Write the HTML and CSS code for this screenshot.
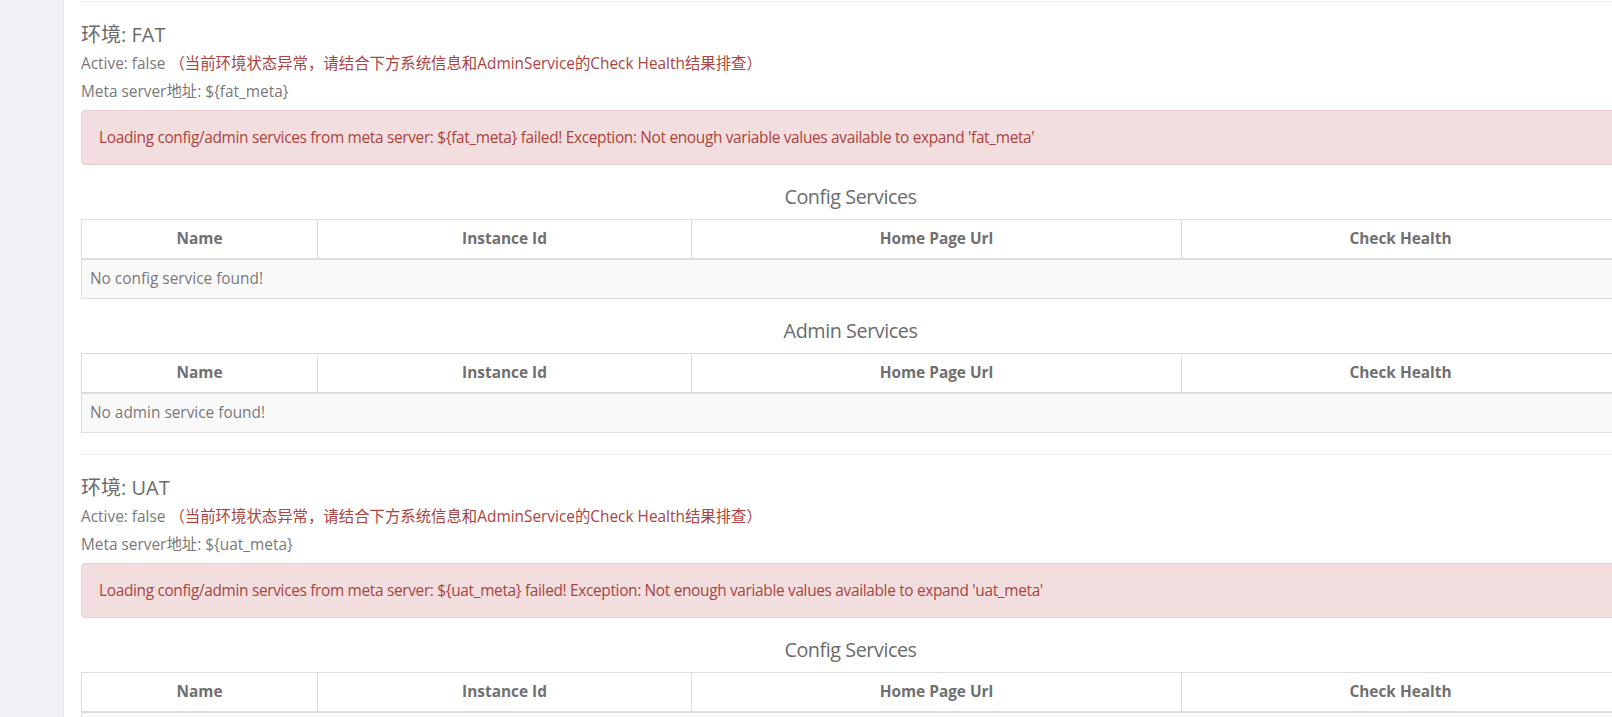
FILE: index.html
```html
<!DOCTYPE html>
<html lang="zh-CN">
<head>
<meta charset="utf-8">
<title>系统信息</title>
<link rel="stylesheet" href="styles.css">
</head>
<body>
<div class="layout">
  <aside class="sidebar"></aside>
  <main class="main">
    <section class="env">
      <h4 class="env-title">环境: FAT</h4>
      <div class="info-line">Active: false <span class="danger">（当前环境状态异常，请结合下方系统信息和AdminService的Check Health结果排查）</span></div>
      <div class="info-line">Meta server地址: ${fat_meta}</div>
      <div class="alert">Loading config/admin services from meta server: ${fat_meta} failed! Exception: Not enough variable values available to expand 'fat_meta'</div>
      <h4 class="svc-title">Config Services</h4>
      <table class="svc-table">
        <colgroup><col class="c-name"><col class="c-inst"><col class="c-url"><col class="c-health"></colgroup>
        <thead><tr><th>Name</th><th>Instance Id</th><th>Home Page Url</th><th>Check Health</th></tr></thead>
        <tbody><tr><td colspan="4">No config service found!</td></tr></tbody>
      </table>
      <h4 class="svc-title">Admin Services</h4>
      <table class="svc-table">
        <colgroup><col class="c-name"><col class="c-inst"><col class="c-url"><col class="c-health"></colgroup>
        <thead><tr><th>Name</th><th>Instance Id</th><th>Home Page Url</th><th>Check Health</th></tr></thead>
        <tbody><tr><td colspan="4">No admin service found!</td></tr></tbody>
      </table>
    </section>
    <section class="env">
      <h4 class="env-title">环境: UAT</h4>
      <div class="info-line">Active: false <span class="danger">（当前环境状态异常，请结合下方系统信息和AdminService的Check Health结果排查）</span></div>
      <div class="info-line">Meta server地址: ${uat_meta}</div>
      <div class="alert">Loading config/admin services from meta server: ${uat_meta} failed! Exception: Not enough variable values available to expand 'uat_meta'</div>
      <h4 class="svc-title">Config Services</h4>
      <table class="svc-table">
        <colgroup><col class="c-name"><col class="c-inst"><col class="c-url"><col class="c-health"></colgroup>
        <thead><tr><th>Name</th><th>Instance Id</th><th>Home Page Url</th><th>Check Health</th></tr></thead>
        <tbody><tr><td colspan="4">No config service found!</td></tr></tbody>
      </table>
      <h4 class="svc-title">Admin Services</h4>
      <table class="svc-table">
        <colgroup><col class="c-name"><col class="c-inst"><col class="c-url"><col class="c-health"></colgroup>
        <thead><tr><th>Name</th><th>Instance Id</th><th>Home Page Url</th><th>Check Health</th></tr></thead>
        <tbody><tr><td colspan="4">No admin service found!</td></tr></tbody>
      </table>
    </section>
  </main>
</div>
</body>
</html>
```

FILE: styles.css
```css
html, body {
  margin: 0;
  padding: 0;
  height: 100%;
  overflow: hidden;
  background: #fff;
}

body {
  font-family: "Open Sans", "Noto Sans CJK SC", sans-serif;
  font-size: 15.4px;
  color: #797979;
}

.layout {
  display: flex;
  height: 717px;
  overflow: hidden;
}

.sidebar {
  flex: 0 0 63px;
  background: #eff1f6;
  border-right: 1px solid #e2e4ea;
}

.main {
  flex: 0 0 1538px;
  padding: 1px 0 0 17px;
}

.env {
  border-top: 1px solid #eeeeee;
  padding-bottom: 21px;
}

.env-title {
  margin: 21px 0 0;
  font-size: 20px;
  font-weight: 400;
  line-height: 24px;
  color: #6c6c6c;
}

.info-line {
  line-height: 28px;
}

.env-title + .info-line {
  margin-top: 3px;
}

.danger {
  color: #a94442;
}

.alert {
  margin-top: 4px;
  padding: 16px 17px;
  line-height: 21px;
  letter-spacing: -0.32px;
  background: #f2dede;
  border: 1px solid #ebccd1;
  border-radius: 4px;
  color: #a94442;
}

.svc-title {
  margin: 20px 0 10px;
  font-size: 19.8px;
  font-weight: 400;
  line-height: 24px;
  letter-spacing: -0.45px;
  text-align: center;
  color: #6c6c6c;
}

.svc-table {
  width: 1538px;
  table-layout: fixed;
  border-collapse: collapse;
  border: 1px solid #dddddd;
}

.c-name { width: 236px; }
.c-inst { width: 374px; }
.c-url { width: 490px; }
.c-health { width: 438px; }

.svc-table th {
  padding: 8px;
  line-height: 22px;
  font-weight: 700;
  text-align: center;
  color: #707070;
  border: 1px solid #dddddd;
  border-bottom-width: 2px;
  background: #fff;
}

.svc-table td {
  padding: 8px;
  line-height: 22px;
  text-align: left;
  background: #f9f9f9;
  border: 1px solid #dddddd;
}
```
